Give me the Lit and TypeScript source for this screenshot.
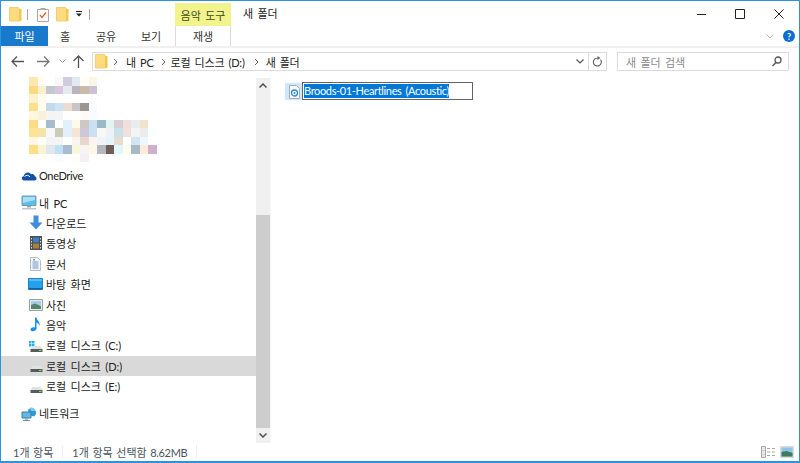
import { LitElement, html, css, svg } from "lit";
import { customElement } from "lit/decorators.js";

const folder = html`<svg width="13" height="15" viewBox="0 0 13 15"><path d="M.5 .5h9l1 1v12.500h-10z" fill="#fddc7f" stroke="#efd07a"/><path d="M10 2h2.500v12H10z" fill="#f3c64f"/></svg>`;

const mosaic: string[][] = [
  ["#fde9b0","#fffdf5","#fff","#f8f8f8","#d0cce0","#e0eaee","#fffef8","#f8f6e4"],
  ["#fdd97f","#f8f0d0","#c4c8cc","#dcc4dc","#e4eaf0","#bcb4bc","#c8bca8","#ccc0d4"],
  ["#fbf2cf","#fffcf0"],
  ["#fde08c","#fffdf0","#c4dae8","#cce4f4","#ecdcd0","#c8c4c8","#9c9890","#f8fbff"],
  ["#fff8e0","#faf2d8","#f4f4f4","#f4f4f4","#fff","#fff","#fffaf8","#f8fbff"],
  ["#fddc88","#fff","#a8bccc","#fff","#e0f0fc","#fffae8","#ccc8c4","#cce0f4","#9cb8c4","#e0f4f0","#dcccd8","#f0e0dc","#e8ecf0","#f0e4c8"],
  ["#fde394","#f4e4a8","#f8f8f8","#ccccb8","#e0f0fc","#f8e4d4","#ccc8d8","#cce0f4","#f8f8f4","#eef2f6","#cce0ec","#f0e0dc","#f4f4f4","#ececec","#f8ffff"],
  ["#fff8e8","#fffdf8","#f4f4f4","#f4f4f4","#fff","#f8f4f0","#e8d8cc","#fcf4f0","#f0f4f8","#e4f4fc","#e8dccc","#fff","#d4e4f0","#ecf8fc"],
  ["#fddf8a","#f8f4d4","#e0e8ec","#c0e0f4","#a8bcd0","#f8f8d8","#f8f4f4","#fcf8e8","#b4b8bc","#705c58","#e0f8fc","#fcfcf0","#a8b8c4","#fcecd8","#ccb0cc"],
  ["#fffef8","#fffef8","#fff","#f8fcff","#fff","#fffef8","#f4f0f4"],
];

const ico = (w: number, h: number, body: unknown) =>
  html`<svg width=${w} height=${h} viewBox="0 0 ${w} ${h}">${body}</svg>`;

const drive = (win = false) => ico(14, 15, svg`
  ${win ? svg`<path d="M0 3h2.500v2.500H0zM3 3h2.500v2.500H3zM0 6h2.500v2.500H0zM3 6h2.500v2.500H3z" fill="#22b0e6"/>` : ""}
  <path d="M3.500 8h8l2 3H1.500z" fill="#dfe2e3"/>
  <path d="M1.500 11h12v3h-12z" fill="#565b5c"/>
  <path d="M10 12h2.500v1H10z" fill="#8fd35c"/>`);

const icons = {
  onedrive: ico(16, 11, svg`<path d="M3 10.500C.5 10.500 0 6.800 2.600 6.300 3.300 2.500 8 1 10 4.200c2-.8 3.600.4 3.700 2C16 6.500 16.300 10.500 13.500 10.500z" fill="#0f4fa8"/><path d="M3.500 6.500C5 4.800 8 5 9 7" fill="none" stroke="#fff" stroke-width="1"/>`),
  pc: ico(16, 15, svg`<path d="M1 1h14v9.500H1z" fill="#5cc0ee" stroke="#7a98aa"/><path d="M2 2h12v3L2 8z" fill="#a5e0f8"/><path d="M6 11h4v1.500H6z" fill="#9aa8b0"/><path d="M1 13h14v1.500H1z" fill="#bcc6cc"/>`),
  down: ico(14, 15, svg`<path d="M4.500 .5h5v7h4L7 14.500 .5 7.500h4z" fill="#3f8fdc"/>`),
  video: ico(12, 14, svg`<path d="M0 0h12v14H0z" fill="#4a5056"/><path d="M3 1.500h6v5H3z" fill="#3d7fc0"/><path d="M3 7.500h6v5H3z" fill="#a9813a"/><path d="M1 2h1v1.500H1zM1 5h1v1.500H1zM1 8h1v1.500H1zM1 11h1v1.500H1zM10 2h1v1.500h-1zM10 5h1v1.500h-1zM10 8h1v1.500h-1zM10 11h1v1.500h-1z" fill="#d8dadb"/>`),
  doc: ico(11, 14, svg`<path d="M.5 .5h7l3 3v10H.5z" fill="#f4f6f8" stroke="#b6bcc2"/><path d="M2.500 5h6M2.500 7h6M2.500 9h6M2.500 11h6" stroke="#6f97c4"/><path d="M3 2h2v1.500H3z" fill="#6f97c4"/>`),
  desktop: ico(15, 12, svg`<path d="M.5 .5h14v11H.5z" fill="#25a0ea" stroke="#2080c8"/><path d="M1 10h13v1.500H1z" fill="#17609e"/><path d="M1 1h13v2H1z" fill="#52bdf2"/>`),
  photo: ico(14, 12, svg`<path d="M.5 .5h13v11H.5z" fill="#e8ecef" stroke="#98a0a8"/><path d="M2 2h10v4H2z" fill="#a9cfe8"/><path d="M2 6l4-1.500L12 7v3H2z" fill="#55836c"/>`),
  music: ico(11, 15, svg`<path d="M5 .5h1.500C7 4 10.500 4.500 9.500 9 9 6.500 7.500 6 6.500 5.500v6.300C6.500 14 .5 15.500 .5 12.500.5 10.500 3.500 9.800 5 10.500z" fill="#1b8fe6"/>`),
  net: ico(16, 15, svg`<path d="M7 4a4.500 4.500 0 1 1 6 6.500L8 9z" fill="#2c9ad8"/><path d="M9 1.500c3-.5 5 1.500 5 3.500L10 5z" fill="#7ccaf0"/><path d="M1 6h9v6H1z" fill="#5fb8e8" stroke="#3d7ea8"/><path d="M4 12.500h3v1H4zM2 14h7v1H2z" fill="#6d8da2"/>`),
};

type Row = { icon: unknown; label: string; cls?: string };
const pcRows: Row[] = [
  { icon: icons.down, label: "다운로드" },
  { icon: icons.video, label: "동영상" },
  { icon: icons.doc, label: "문서" },
  { icon: icons.desktop, label: "바탕 화면" },
  { icon: icons.photo, label: "사진" },
  { icon: icons.music, label: "음악" },
  { icon: drive(true), label: "로컬 디스크 (C:)" },
  { icon: drive(), label: "로컬 디스크 (D:)", cls: "sel" },
  { icon: drive(), label: "로컬 디스크 (E:)" },
];

const crumbPath = svg`<path d="M1 1l3 3-3 3" fill="none" stroke="#666"/>`;

@customElement("app-root")
export class AppRoot extends LitElement {
  static styles = css`
    :host { display: block; width: 800px; height: 463px; }
    * { box-sizing: border-box; }
    .win { width: 800px; height: 463px; border: 1px solid #2b93e0; border-bottom-width: 2px; background: #fff;
      display: flex; flex-direction: column; overflow: hidden; color: #1a1a1a; word-spacing: 1.500px;
      font: 11px Lato, "Noto Sans CJK KR", sans-serif; }
    svg { display: block; flex: none; }
    .lat { letter-spacing: -.35px; }

    .title { height: 25px; display: flex; align-items: center; flex: none; }
    .qa { display: flex; align-items: center; height: 25px; padding-top: 1px; width: 174px; padding-left: 8px; }
    .qa .sep { width: 1px; height: 11px; background: #a8a8a8; }
    .qa .sep.first { margin: 0 9px 0 5px; }
    .qa .gap { width: 7px; }
    .qa .dropdown { margin: 0 6px; }
    .ctx { width: 56px; height: 23px; margin-top: 2px; background: #f2f38c; display: flex; align-items: center; justify-content: center; color: #3e4a20; }
    .tname { margin-left: 12px; flex: 1; padding-bottom: 1px; }
    .wc { display: flex; align-items: center; padding-right: 15px; gap: 29px; }

    .tabs { height: 20px; display: flex; flex: none; align-items: stretch; }
    .tab { display: flex; align-items: center; justify-content: center; color: #333; }
    .tab.file { width: 47px; background: #1979ca; color: #fff; }
    .tab.t1 { width: 34px; }
    .tab.t2 { width: 48px; }
    .tab.t3 { width: 42px; }
    .tab.play { width: 56px; margin-left: 3px; border: 1px solid #dadbdc; border-top: 0; border-bottom: 0; background: #fff; }
    .tabs .sp { flex: 1; }
    .tabs .rt { display: flex; align-items: center; gap: 9px; padding-right: 4px; }
    .help { width: 12px; height: 12px; border-radius: 50%; background: #0a6fd0; color: #fff; font-size: 9px; font-weight: 700; display: flex; align-items: center; justify-content: center; }
    .rule { height: 2px; background: #f0f0f0; flex: none; }

    .nav { height: 29px; flex: none; display: flex; align-items: flex-start; padding-top: 4px; }
    .btns { width: 91px; height: 19px; flex: none; display: flex; align-items: center; padding-left: 10px; }
    .btns .fwd { margin-left: 13px; }
    .btns .rec { margin-left: 9px; }
    .btns .up { margin-left: 7px; }
    .addr { width: 515px; height: 19px; border: 1px solid #dcdcdc; display: flex; align-items: center; padding-left: 2px; flex: none; color: #222; letter-spacing: -.2px; }
    .addr .fill { flex: 1; }
    .addr .c0 { margin: 0 8px 0 5px; }
    .addr .c1 { margin: 0 5px 0 7px; }
    .addr .c2 { margin: 0 7px 0 9px; }
    .addr .dd { width: 17px; display: flex; justify-content: center; }
    .addr .rf { width: 18px; height: 17px; border-left: 1px solid #dcdcdc; display: flex; align-items: center; justify-content: center; }
    .search { margin-left: 10px; width: 172px; height: 19px; border: 1px solid #dcdcdc; display: flex; align-items: center; justify-content: space-between; padding: 0 6px 0 8px; color: #8a8a8a; flex: none; }

    .body { flex: 1; min-height: 0; display: flex; }
    .side { width: 255px; flex: none; }
    .mosaic { margin-left: 28px; display: grid; grid-template-columns: repeat(15, 8.500px); grid-auto-rows: 8.500px; height: 85px; }
    .row { height: 20.400px; display: flex; align-items: center; color: #222; }
    .row .ic { width: 17px; display: flex; justify-content: center; flex: none; margin-right: 2px; }
    .row.top { padding-left: 19px; }
    .row.sub { padding-left: 26px; }
    .row.sel { background: #d9d9d9; }
    .g1 { margin-top: 3px; }
    .g2 { margin-top: 7px; }
    .g3 { margin-top: 7px; }

    .sb { width: 15px; flex: none; border-right: 1px solid #f6f6f6; background: #f0f0f0; display: flex; flex-direction: column; margin-right: 14px; margin-top: 1px; }
    .sb .arr { height: 15px; display: flex; align-items: center; justify-content: center; flex: none; }
    .sb .track { height: 122px; flex: none; }
    .sb .thumb { flex: 1; background: #cdcdcd; }

    .main { flex: 1; padding-top: 5px; }
    .item { display: flex; height: 17px; width: 187px; align-items: flex-start; }
    .item .icw { width: 17px; height: 17px; background: #cce8ff; display: flex; align-items: center; justify-content: center; flex: none; margin-top: 1px; padding-left: 2px; }
    .ren { width: 171px; height: 18px; border: 1px solid #646464; background: #fff; padding-left: 1px; display: flex; align-items: center; flex: none; }
    .ren span { background: #0078d7; color: #fff; line-height: 14px; height: 14px; white-space: nowrap; }

    .status { height: 18px; flex: none; display: flex; align-items: center; color: #4a5560; padding-left: 12px; padding-bottom: 1px; word-spacing: .8px; }
    .status .d { width: 1px; height: 13px; background: #eeeeee; margin: 0 9px; }
    .status .sp { flex: 1; }
    .views { display: flex; align-items: center; gap: 5px; padding-right: 5px; }
  `;

  render() {
    return html`<div class="win">
      <div class="title">
        <div class="qa">
          ${folder}
          <span class="sep first"></span>
          <svg width="12" height="15" viewBox="0 0 12 15"><path d="M.5 2.500h11v12H.5z" fill="#fbfbfb" stroke="#a9a9a9"/><path d="M3.500 1h5v2h-5z" fill="#a9a9a9"/><path d="M3 8l2 2.500L9 5.500" fill="none" stroke="#e8662b" stroke-width="1.400"/></svg>
          <span class="gap"></span>
          ${folder}
          <svg class="dropdown" width="8" height="6" viewBox="0 0 8 6"><path d="M1 .5h6" stroke="#222"/><path d="M1 2.500h6L4 5.500z" fill="#222"/></svg>
          <span class="sep"></span>
        </div>
        <div class="ctx">음악 도구</div>
        <div class="tname">새 폴더</div>
        <div class="wc">
          <svg width="9" height="10" viewBox="0 0 9 10"><path d="M0 5.500h9" stroke="#222"/></svg>
          <svg width="10" height="10" viewBox="0 0 10 10"><path d="M.5 .5h9v9h-9z" fill="none" stroke="#222"/></svg>
          <svg width="10" height="10" viewBox="0 0 10 10"><path d="M.5 .5l9 9M9.500 .5l-9 9" stroke="#222"/></svg>
        </div>
      </div>
      <div class="tabs">
        <div class="tab file">파일</div>
        <div class="tab t1">홈</div>
        <div class="tab t2">공유</div>
        <div class="tab t3">보기</div>
        <div class="tab play">재생</div>
        <div class="sp"></div>
        <div class="rt">
          <svg width="8" height="5" viewBox="0 0 8 5"><path d="M.5 .5L4 4l3.500-3.500" fill="none" stroke="#b5b5b5"/></svg>
          <div class="help">?</div>
        </div>
      </div>
      <div class="rule"></div>
      <div class="nav">
        <div class="btns">
          <svg width="13" height="11" viewBox="0 0 13 11"><path d="M6 .5L1 5.500l5 5M1 5.500h12" fill="none" stroke="#555" stroke-width="1.300"/></svg>
          <svg class="fwd" width="13" height="11" viewBox="0 0 13 11"><path d="M7 .5l5 5-5 5M12 5.500H0" fill="none" stroke="#777" stroke-width="1.300"/></svg>
          <svg class="rec" width="7" height="5" viewBox="0 0 7 5"><path d="M.5 .5l3 3 3-3" fill="none" stroke="#999"/></svg>
          <svg class="up" width="11" height="13" viewBox="0 0 11 13"><path d="M.5 6L5.500 1l5 5M5.500 1v12" fill="none" stroke="#555" stroke-width="1.300"/></svg>
        </div>
        <div class="addr">
          ${folder}
          <svg class="c0" width="5" height="8" viewBox="0 0 5 8">${crumbPath}</svg>
          <span>내 PC</span>
          <svg class="c1" width="5" height="8" viewBox="0 0 5 8">${crumbPath}</svg>
          <span>로컬 디스크 (D:)</span>
          <svg class="c2" width="5" height="8" viewBox="0 0 5 8">${crumbPath}</svg>
          <span>새 폴더</span>
          <span class="fill"></span>
          <span class="dd"><svg width="8" height="5" viewBox="0 0 8 5"><path d="M.5 .5L4 4l3.500-3.500" fill="none" stroke="#555" stroke-width="1.200"/></svg></span>
          <span class="rf"><svg width="11" height="12" viewBox="0 0 11 12"><path d="M8.500 3.500a4 4 0 1 1-3-1.500H7" fill="none" stroke="#666" stroke-width="1.200"/><path d="M5.500 0l3 2-3 2z" fill="#666"/></svg></span>
        </div>
        <div class="search">
          <span>새 폴더 검색</span>
          <svg width="10" height="11" viewBox="0 0 10 11"><circle cx="6" cy="4" r="3" fill="none" stroke="#555" stroke-width="1.300"/><path d="M4 6.500L.5 10" stroke="#555" stroke-width="1.500"/></svg>
        </div>
      </div>
      <div class="body">
        <div class="side">
          <div class="mosaic">
            ${mosaic.flatMap((r) => {
              const cells = [...r, ...Array(15 - r.length).fill("#fff")];
              return cells.map((c) => html`<span style="background:${c}"></span>`);
            })}
          </div>
          <div class="row top g1"><span class="ic">${icons.onedrive}</span><span class="lat">OneDrive</span></div>
          <div class="row top g2"><span class="ic">${icons.pc}</span>내 PC</div>
          ${pcRows.map((r) => html`<div class="row sub ${r.cls ?? ""}"><span class="ic">${r.icon}</span>${r.label}</div>`)}
          <div class="row top g3"><span class="ic">${icons.net}</span>네트워크</div>
        </div>
        <div class="sb">
          <div class="arr"><svg width="8" height="5" viewBox="0 0 8 5"><path d="M.5 4.500L4 1l3.500 3.500" fill="none" stroke="#505050" stroke-width="1.500"/></svg></div>
          <div class="track"></div>
          <div class="thumb"></div>
          <div class="arr"><svg width="8" height="5" viewBox="0 0 8 5"><path d="M.5 .5L4 4l3.500-3.500" fill="none" stroke="#505050" stroke-width="1.500"/></svg></div>
        </div>
        <div class="main">
          <div class="item">
            <div class="icw"><svg width="11" height="14" viewBox="0 0 11 14"><path d="M.5 .5h7l3 3v10H.5z" fill="#f6f8fa" stroke="#a5adb5"/><circle cx="5.500" cy="8" r="3" fill="none" stroke="#2f86d4" stroke-width="1.300"/><circle cx="5.500" cy="8" r="1" fill="#2f86d4"/></svg></div>
            <div class="ren"><span class="lat">Broods-01-Heartlines (Acoustic)</span></div>
          </div>
        </div>
      </div>
      <div class="status">
        <span>1개 항목</span><span class="d"></span>
        <span>1개 항목 선택함 <span class="lat">8.62MB</span></span><span class="d"></span>
        <span class="sp"></span>
        <div class="views">
          <svg width="14" height="12" viewBox="0 0 14 12"><path d="M.5 .5h4v11h-4z" fill="#e8e8ec" stroke="#a8a8a8"/><path d="M1 4h3v1H1z" fill="#b8d4ec"/><path d="M1 8h3v1H1z" fill="#f0c8d0"/><path d="M6 2h3v1H6zM11 2h3v1h-3zM6 5.500h3v1H6zM11 5.500h3v1h-3zM6 9h3v1H6zM11 9h3v1h-3z" fill="#a8a8a8"/></svg>
          <svg width="14" height="12" viewBox="0 0 14 12"><path d="M0 0h14v12H0z" fill="#d5dde2"/><path d="M1.500 1.500h11v9h-11z" fill="#8cc4e8"/><path d="M1.500 6l5-1 6 2v3.500h-11z" fill="#3f7a5e"/></svg>
        </div>
      </div>
    </div>`;
  }
}
